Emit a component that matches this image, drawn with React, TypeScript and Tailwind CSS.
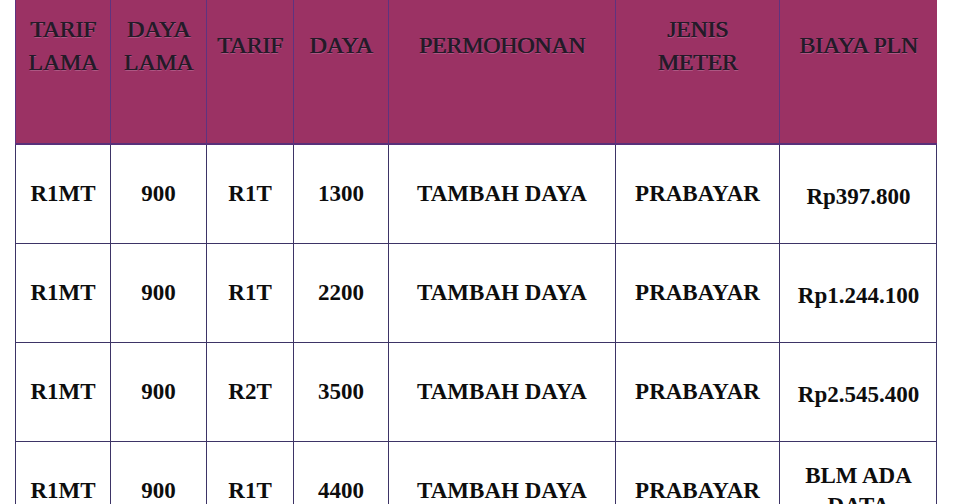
import React from "react";

const cols = "grid-cols-[95px_96px_87px_95px_227px_164px_158px]";

const headers: string[][] = [
  ["TARIF", "LAMA"],
  ["DAYA", "LAMA"],
  ["TARIF"],
  ["DAYA"],
  ["PERMOHONAN"],
  ["JENIS", "METER"],
  ["BIAYA PLN"],
];

const rows: string[][][] = [
  [["R1MT"], ["900"], ["R1T"], ["1300"], ["TAMBAH DAYA"], ["PRABAYAR"], ["Rp397.800"]],
  [["R1MT"], ["900"], ["R1T"], ["2200"], ["TAMBAH DAYA"], ["PRABAYAR"], ["Rp1.244.100"]],
  [["R1MT"], ["900"], ["R2T"], ["3500"], ["TAMBAH DAYA"], ["PRABAYAR"], ["Rp2.545.400"]],
  [["R1MT"], ["900"], ["R1T"], ["4400"], ["TAMBAH DAYA"], ["PRABAYAR"], ["BLM ADA", "DATA"]],
];

export default function App() {
  return (
    <div
      className="w-[960px] h-[504px] overflow-hidden bg-white pl-[15px]"
      style={{ fontFamily: '"Liberation Serif", "Times New Roman", serif' }}
    >
      <div className={`grid ${cols} w-[922px] border-r border-[#3d3466]`}>
        {headers.map((h, i) => (
          <div
            key={i}
            className="h-[145px] bg-[#9b3264] border-l border-[#5e3380] border-b-2 border-b-[#58307a] flex flex-col items-center justify-center pb-[52px] text-[24px] leading-[33px] text-[#241a28] tracking-[-0.3px]"
            style={{
              textShadow:
                "0.6px 0 0 #241a28, 0.8px 0.8px 0 rgba(190,120,160,0.55)",
            }}
          >
            {h.map((l, j) => (
              <span key={j}>{l}</span>
            ))}
          </div>
        ))}
        {rows.map((r, ri) =>
          r.map((c, ci) => (
            <div
              key={`${ri}-${ci}`}
              className={`h-[99px] border-l border-b border-[#3d3466] flex flex-col items-center justify-center font-bold text-[23px] leading-[30px] text-[#0d0d0d] ${
                ci === 6 && c.length === 1 ? "pt-[6px]" : ""
              }`}
            >
              {c.map((l, j) => (
                <span key={j}>{l}</span>
              ))}
            </div>
          ))
        )}
      </div>
    </div>
  );
}
